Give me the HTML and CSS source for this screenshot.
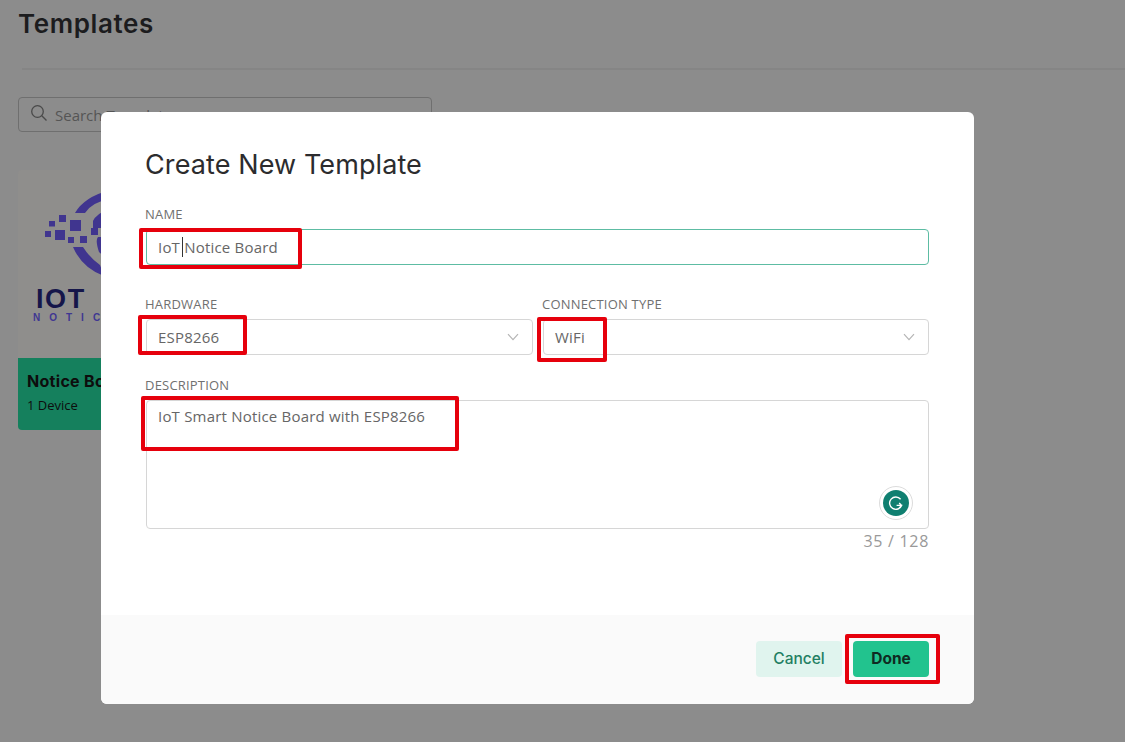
FILE: index.html
```html
<!DOCTYPE html>
<html lang="en">
<head>
<meta charset="utf-8">
<title>Templates</title>
<link rel="stylesheet" href="styles.css">
</head>
<body>
<main class="page">
  <h1 class="page-title">Templates</h1>
  <hr class="page-rule">
  <div class="search">
    <svg class="search-icon" width="18" height="18" viewBox="0 0 18 18" fill="none" stroke="#4a4a4a" stroke-width="1.3"><circle cx="7.5" cy="7.5" r="5.8"/><path d="M11.8 11.8 16.5 16.5"/></svg>
    <span class="search-text">Search Templates</span>
  </div>
  <article class="card">
    <div class="card-image">
      <svg class="logo-mark" width="80" height="92" viewBox="40 186 80 92">
        <g fill="#40358f">
          <path d="M75 213Q84 197 110 190V199Q92 202 85 213Z"/>
          <path d="M73 247H83Q90 258 100 265L104 276Q82 268 73 247Z"/>
          <path d="M93 221Q96 214 110 208V262L99 252Q95 240 98 237H106V228H93Z"/>
          <rect x="49" y="221" width="6" height="5.5"/>
          <rect x="59" y="215" width="7" height="7"/>
          <rect x="70" y="220" width="11" height="11"/>
          <rect x="45" y="231" width="6" height="6"/>
          <rect x="55" y="230" width="10" height="10"/>
          <rect x="68" y="237" width="6" height="6"/>
          <rect x="80" y="236" width="7" height="7"/>
          <rect x="91" y="228" width="7" height="7"/>
        </g>
      </svg>
      <div class="logo-title">IOT SMART</div>
      <div class="logo-sub">NOTICE BOARD</div>
    </div>
    <div class="card-foot">
      <div class="card-name">Notice Board</div>
      <div class="card-count">1 Device</div>
    </div>
  </article>
</main>

<section class="modal">
  <div class="modal-body">
    <h2 class="modal-title">Create New Template</h2>
    <label class="field-label">NAME</label>
    <div class="input input-active"><span>IoT </span><span class="caret"></span><span>Notice Board</span></div>
    <div class="field-row">
      <div class="field-col">
        <label class="field-label">HARDWARE</label>
        <div class="input select"><span>ESP8266</span>
          <svg width="12" height="8" viewBox="0 0 12 8" fill="none" stroke="#b5b5b5" stroke-width="1.2"><path d="M1 1.2 6 6.6 11 1.2"/></svg>
        </div>
      </div>
      <div class="field-col">
        <label class="field-label">CONNECTION TYPE</label>
        <div class="input select"><span>WiFi</span>
          <svg width="12" height="8" viewBox="0 0 12 8" fill="none" stroke="#b5b5b5" stroke-width="1.2"><path d="M1 1.2 6 6.6 11 1.2"/></svg>
        </div>
      </div>
    </div>
    <label class="field-label">DESCRIPTION</label>
    <div class="textarea">IoT Smart Notice Board with ESP8266
      <span class="grammarly">
        <svg width="26" height="26" viewBox="0 0 26 26"><circle cx="13" cy="13" r="13" fill="#0f7f70"/><path d="M17.6 9.2A6.2 6.2 0 1 0 18.6 15.4H13.6M18.6 15.4 16.2 13M18.6 15.4 16.2 18" fill="none" stroke="#fff" stroke-width="1.4"/></svg>
      </span>
    </div>
    <div class="counter">35 / 128</div>
  </div>
  <footer class="modal-foot">
    <button class="btn btn-cancel">Cancel</button>
    <button class="btn btn-done">Done</button>
  </footer>
</section>

<div class="mark mark-name"></div>
<div class="mark mark-hardware"></div>
<div class="mark mark-wifi"></div>
<div class="mark mark-desc"></div>
<div class="mark mark-done"></div>
</body>
</html>
```

FILE: styles.css
```css
* { box-sizing: border-box; }
html, body { height: 100%; }
body {
  margin: 0;
  background: #8c8c8c;
  font-family: "Open Sans", "Noto Sans", sans-serif;
  overflow: hidden;
  position: relative;
}
.page { padding: 8px 0 0 18px; }
.page-title {
  margin: 0;
  font: 600 26px/32px Inter, sans-serif;
  letter-spacing: .6px;
  color: #1c1c1e;
}
.page-rule {
  margin: 28px 0 0 4px;
  border: 0;
  height: 2px;
  background: #858585;
}
.search {
  margin-top: 27px;
  width: 414px;
  height: 35px;
  border: 1px solid #6f6f6f;
  border-radius: 4px;
  display: flex;
  align-items: center;
  gap: 7px;
  padding: 0 0 0 11px;
  color: #555;
  font-size: 15px;
}
.search-icon { margin-top: -3px; }
.card {
  margin-top: 38px;
  width: 210px;
  height: 260px;
  display: flex;
  flex-direction: column;
  border-radius: 4px;
  background: #8f8e8c;
  overflow: hidden;
}
.card-image { height: 188px; position: relative; padding: 16px 0 0 22px; }
.logo-mark { display: block; }
.logo-title {
  position: absolute; left: 18px; top: 112px;
  font: 700 27px/34px "Liberation Sans", sans-serif;
  letter-spacing: 1.6px;
  word-spacing: 6px;
  color: #15164a;
  white-space: nowrap;
}
.logo-sub {
  position: absolute; left: 15px; top: 142px;
  font: 700 10px/12px "Liberation Sans", sans-serif;
  letter-spacing: 9px;
  color: #3f3792;
  white-space: nowrap;
}
.card-foot {
  flex: 1;
  background: #15805d;
  padding: 13px 9px;
  color: #0d0d0d;
}
.card-name { font: 700 16px/20px Inter, sans-serif; letter-spacing: .3px; }
.card-count { font-size: 13px; line-height: 18px; margin-top: 5px; }

.modal {
  position: absolute;
  left: 101px; top: 112px;
  width: 873px; height: 592px;
  background: #fff;
  border-radius: 6px;
  display: flex;
  flex-direction: column;
  overflow: hidden;
}
.modal-body { flex: 1; padding: 36px 45px 0 44px; }
.modal-title {
  margin: 0 0 23px;
  font: 400 27px/34px Inter, sans-serif;
  letter-spacing: .1px;
  color: #2c2c2e;
}
.field-label {
  display: block;
  font-size: 13px;
  line-height: 18px;
  letter-spacing: .2px;
  color: #707070;
  margin-bottom: 6px;
}
.input {
  height: 36px;
  margin-left: 1px;
  border: 1px solid #d6d6d6;
  border-radius: 4px;
  padding: 0 11px;
  display: flex;
  align-items: center;
  font-size: 15px;
  letter-spacing: .2px;
  color: #666;
  white-space: pre;
}
.input-active { border-color: #5dbca3; margin-bottom: 30px; }
.caret { display: inline-block; width: 1px; height: 20px; margin: 0 1px 0 -2px; background: #333; }
.select { justify-content: space-between; padding-right: 13px; }
.field-row { display: grid; grid-template-columns: 388px 387px; gap: 9px; margin-bottom: 21px; }
.textarea {
  position: relative;
  height: 129px;
  margin-left: 1px;
  border: 1px solid #d6d6d6;
  border-radius: 4px;
  padding: 5px 11px;
  font-size: 15px;
  letter-spacing: .2px;
  line-height: 20px;
  color: #666;
}
.grammarly {
  position: absolute;
  right: 15px; bottom: 8px;
  width: 34px; height: 34px;
  border-radius: 50%;
  background: #fff;
  border: 1px solid #dcdcdc;
  display: flex;
  align-items: center;
  justify-content: center;
}
.counter {
  margin-top: 2px;
  text-align: right;
  font-size: 16px;
  line-height: 20px;
  letter-spacing: .7px;
  color: #999;
}
.modal-foot {
  height: 89px;
  background: #fafafa;
  padding: 26px 45px 0 0;
  display: flex;
  justify-content: flex-end;
  align-items: flex-start;
  gap: 11px;
}
.btn {
  height: 36px;
  border: 0;
  border-radius: 4px;
  font: 500 15.5px/36px Inter, sans-serif;
  padding: 0;
}
.btn-cancel { width: 86px; background: #e0f4ee; color: #1f7f62; }
.btn-done { width: 76px; background: #22c38e; color: #0f2b22; font-weight: 700; }

.mark {
  position: absolute;
  border: 4px solid #e6000c;
  border-radius: 2px;
}
.mark-name { left: 139px; top: 228px; width: 163px; height: 41px; }
.mark-hardware { left: 138px; top: 315px; width: 109px; height: 40px; }
.mark-wifi { left: 537px; top: 317px; width: 70px; height: 45px; }
.mark-desc { left: 141px; top: 396px; width: 318px; height: 55px; }
.mark-done { left: 845px; top: 634px; width: 95px; height: 50px; }
```
